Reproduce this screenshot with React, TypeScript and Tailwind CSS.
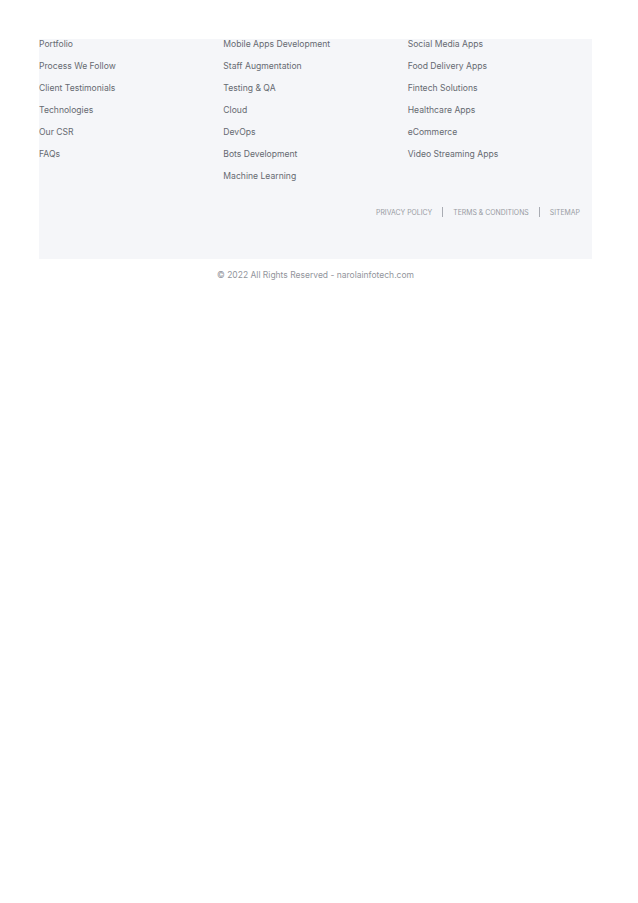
import React from "react"

const columns = [
  ["Portfolio", "Process We Follow", "Client Testimonials", "Technologies", "Our CSR", "FAQs"],
  [
    "Mobile Apps Development",
    "Staff Augmentation",
    "Testing & QA",
    "Cloud",
    "DevOps",
    "Bots Development",
    "Machine Learning",
  ],
  [
    "Social Media Apps",
    "Food Delivery Apps",
    "Fintech Solutions",
    "Healthcare Apps",
    "eCommerce",
    "Video Streaming Apps",
  ],
]

const legal = ["Privacy Policy", "Terms & Conditions", "Sitemap"]

export default function App() {
  return (
    <div className="min-h-[903px] bg-white pt-[39px] font-['Inter','Liberation_Sans',sans-serif]">
      <div className="ml-[39px] w-[553px]">
        <div className="bg-[#f5f6f9] pb-[42px]">
          <div className="grid grid-cols-3">
            {columns.map((col, i) => (
              <ul key={i} className="flex flex-col gap-[12px]">
                {col.map((item) => (
                  <li key={item} className="text-[8.6px] leading-[10px] text-[#666a71]">
                    {item}
                  </li>
                ))}
              </ul>
            ))}
          </div>
          <div className="mt-[26px] flex items-center justify-end pr-[12px] text-[6.9px] leading-[9px] uppercase text-[#999ca3]">
            {legal.map((l, i) => (
              <React.Fragment key={l}>
                {i > 0 && <span className="mx-[10px] h-[10px] w-px bg-[#a9acb3]" />}
                <span>{l}</span>
              </React.Fragment>
            ))}
          </div>
        </div>
        <p className="mt-[11px] text-center text-[8.5px] leading-[11px] text-[#92959c]">
          © 2022 All Rights Reserved - narolainfotech.com
        </p>
      </div>
    </div>
  )
}
